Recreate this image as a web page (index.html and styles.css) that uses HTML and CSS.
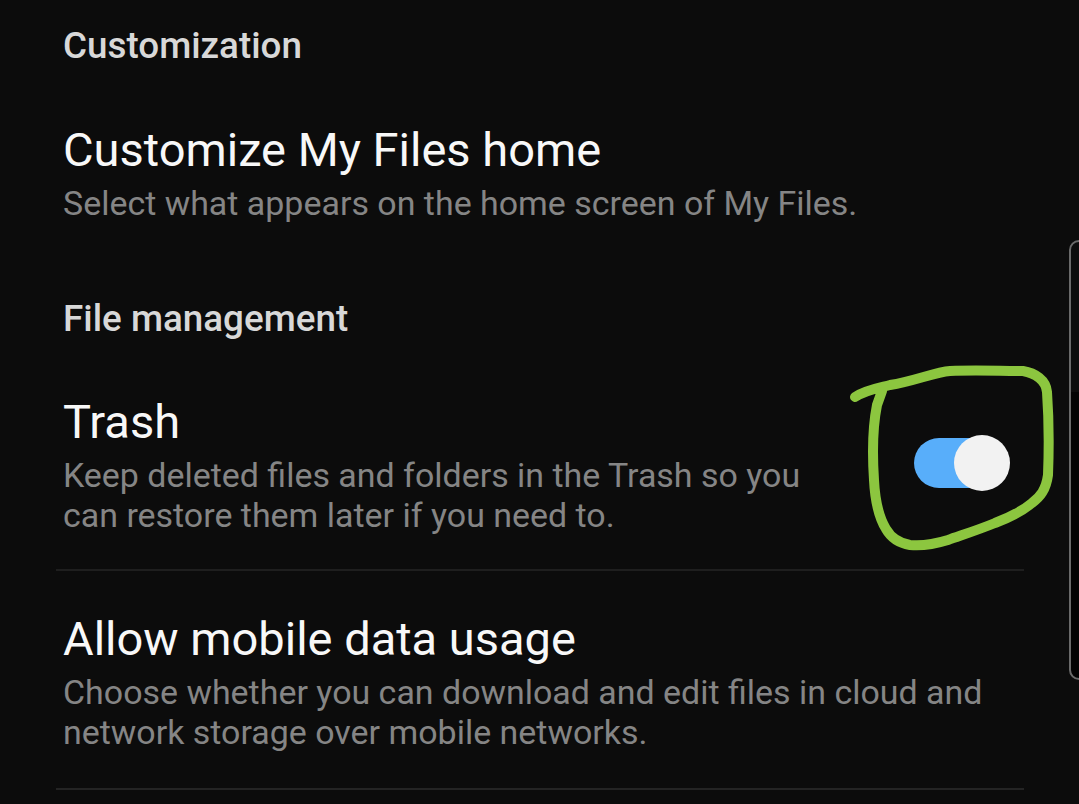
FILE: index.html
```html
<!DOCTYPE html>
<html lang="en">
<head>
<meta charset="utf-8">
<title>My Files settings</title>
<link rel="stylesheet" href="styles.css">
</head>
<body>
<main class="screen">
  <h2 class="section first">Customization</h2>
  <div class="row plain">
    <div class="text">
      <div class="title">Customize My Files home</div>
      <div class="sub">Select what appears on the home screen of My Files.</div>
    </div>
  </div>
  <h2 class="section second">File management</h2>
  <div class="row toggle-row">
    <div class="text">
      <div class="title">Trash</div>
      <div class="sub">Keep deleted files and folders in the Trash so you<br>can restore them later if you need to.</div>
    </div>
    <div class="switch"><span class="knob"></span></div>
  </div>
  <div class="row last">
    <div class="text">
      <div class="title">Allow mobile data usage</div>
      <div class="sub">Choose whether you can download and edit files in cloud and<br>network storage over mobile networks.</div>
    </div>
  </div>
  <div class="edge"></div>
  <svg class="scribble" viewBox="0 0 1079 804" aria-hidden="true">
    <path d="M855 397 C 865 390 878 388 890 385 C 915 381 935 372 950 371 C 975 370 1000 371 1023 371 C 1035 373 1046 380 1047 392 C 1049 420 1049 450 1048 475 C 1046 490 1040 497 1032 503 C 1020 513 1008 518 995 523 C 978 530 962 535 948 540 C 935 544 920 546 910 545 C 898 543 890 536 886 529 C 878 516 875 500 874 480 C 872 450 873 425 877 405 L 882 391"/>
  </svg>
</main>
</body>
</html>
```
FILE: styles.css
```css
* { box-sizing: border-box; }
html, body { margin: 0; padding: 0; }
body { background: #0c0c0c; font-family: Roboto, "Liberation Sans", sans-serif; }
.screen { position: relative; width: 1079px; height: 804px; overflow: hidden; padding: 0 55px 0 56px; background: #0c0c0c; }
.section { margin: 0; padding-left: 7px; font-size: 36.8px; line-height: 40px; font-weight: 500; color: #d8d8d8; }
.section.first { padding-top: 26px; }
.section.second { margin-top: 75px; }
.row { display: flex; align-items: center; justify-content: space-between; padding-left: 7px; }
.plain { margin-top: 57px; }
.toggle-row { margin-top: 56px; padding-bottom: 33px; border-bottom: 2px solid #1f1f1f; }
.last { padding-top: 41px; padding-bottom: 35px; border-bottom: 2px solid #242424; }
.title { font-size: 47px; line-height: 54px; color: #f8f8f8; }
.sub { font-size: 33.95px; line-height: 40px; color: #858585; margin-top: 7px; }
.switch { position: relative; width: 86px; height: 50px; margin-right: 24px; margin-bottom: 5px; border-radius: 25px; background: #58aefa; }
.knob { position: absolute; top: -3px; right: -10px; width: 56px; height: 56px; border-radius: 50%; background: #f2f2f2; }
.edge { position: absolute; top: 240px; right: -12px; width: 22px; height: 440px; border: 2px solid #6a6a6a; border-radius: 10px; background: linear-gradient(#0c0c0c 150px, #030303 150px); }
.scribble { position: absolute; inset: 0; width: 1079px; height: 804px; pointer-events: none; }
.scribble path { fill: none; stroke: #8cc63f; stroke-width: 10; stroke-linecap: round; stroke-linejoin: round; }
```
